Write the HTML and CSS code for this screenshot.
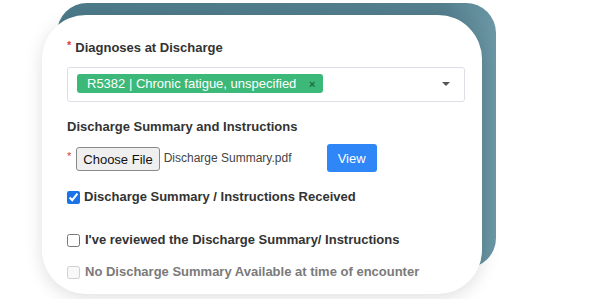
FILE: index.html
```html
<!DOCTYPE html>
<html lang="en">
<head>
  <meta charset="UTF-8" />
  <title>Discharge</title>
  <link rel="stylesheet" href="styles.css">
</head>
<body>
  <div class="stage">
    <div class="card">
      <div class="label"><span class="req">*</span>Diagnoses at Discharge</div>
      <div class="select">
        <span class="tag">R5382 | Chronic fatigue, unspecified <span class="tag-close">&times;</span></span>
        <span class="caret"></span>
      </div>

      <div class="section-title">Discharge Summary and Instructions</div>
      <div class="file-row">
        <span class="req">*</span>
        <button class="file-btn">Choose File</button>
        <span class="file-name">Discharge Summary.pdf</span>
        <button class="view-btn">View</button>
      </div>

      <label class="check check-first"><input type="checkbox" checked> Discharge Summary / Instructions Received</label>
      <label class="check check-second"><input type="checkbox"> I've reviewed the Discharge Summary/ Instructions</label>
      <label class="check check-third disabled"><input type="checkbox" disabled> No Discharge Summary Available at time of encounter</label>
    </div>
  </div>
</body>
</html>
```

FILE: styles.css
```css
* {
  box-sizing: border-box;
}

body {
  margin: 0;
  background: #ffffff;
  font-family: 'Liberation Sans', Arial, sans-serif;
  color: #333;
}

.stage {
  position: relative;
  z-index: 0;
  padding: 15px 0 0 42px;
  height: 299px;
}

/* teal panel behind the card */
.stage::before {
  content: "";
  position: absolute;
  z-index: -1;
  left: 57px;
  top: 3px;
  width: 439px;
  height: 265px;
  border-radius: 30px;
  background: linear-gradient(90deg, #4c7a89 0%, #547f8e 88%, #6b97a5 100%);
}

.card {
  width: 440px;
  height: 279px;
  background: #fff;
  border-radius: 44px;
  box-shadow: 0 4px 18px rgba(0, 0, 0, 0.13);
  padding: 25px 17px 0 25px;
}

.req {
  color: #e23b3b;
  font-size: 11px;
  position: relative;
  top: -3px;
  margin-right: 4px;
}

.label {
  font-size: 13px;
  font-weight: bold;
  line-height: 16px;
  color: #333;
}

.select {
  margin-top: 11px;
  height: 35px;
  width: 398px;
  border: 1px solid #dcdfe6;
  border-radius: 3px;
  display: flex;
  align-items: center;
  justify-content: space-between;
  padding: 0 14px 3px 9px;
}

.tag {
  background: #3cb878;
  color: #fff;
  font-size: 13px;
  line-height: 19px;
  height: 19px;
  border-radius: 3px;
  padding: 0 8px 0 10px;
}

.tag-close {
  color: #1d6b42;
  font-weight: bold;
  font-size: 11px;
  margin-left: 9px;
}

.caret {
  width: 0;
  height: 0;
  border-left: 4px solid transparent;
  border-right: 4px solid transparent;
  border-top: 4px solid #555;
  margin-top: 2px;
}

.section-title {
  margin-top: 17px;
  font-size: 13px;
  font-weight: bold;
  line-height: 16px;
}

.file-row {
  margin-top: 9px;
  height: 28px;
  display: flex;
  align-items: center;
}

.file-row .req {
  top: -2px;
  margin-right: 5px;
}

.file-btn {
  font-family: inherit;
  font-size: 13px;
  color: #111;
  background: #efefef;
  border: 1px solid #8a8a8a;
  border-radius: 3px;
  height: 24px;
  padding: 0 6px;
  margin-top: 2px;
}

.file-name {
  font-size: 12px;
  color: #444;
  margin-left: 4px;
  width: 163px;
}

.view-btn {
  font-family: inherit;
  font-size: 13px;
  color: #fff;
  background: #2f86f6;
  border: none;
  border-radius: 3px;
  height: 28px;
  width: 50px;
}

.check {
  display: flex;
  align-items: center;
  font-size: 13px;
  font-weight: bold;
  line-height: 16px;
  color: #333;
}

.check input {
  margin: 0 4px 0 0;
  width: 13px;
  height: 13px;
  accent-color: #1a73e8;
}

.check-first {
  margin-top: 17px;
}

.check-second {
  margin-top: 27px;
}

.check-second input {
  margin-right: 5px;
}

.check-third {
  margin-top: 16px;
}

.check-third input {
  margin-right: 5px;
}

.disabled {
  color: #7a7a7a;
}
```
